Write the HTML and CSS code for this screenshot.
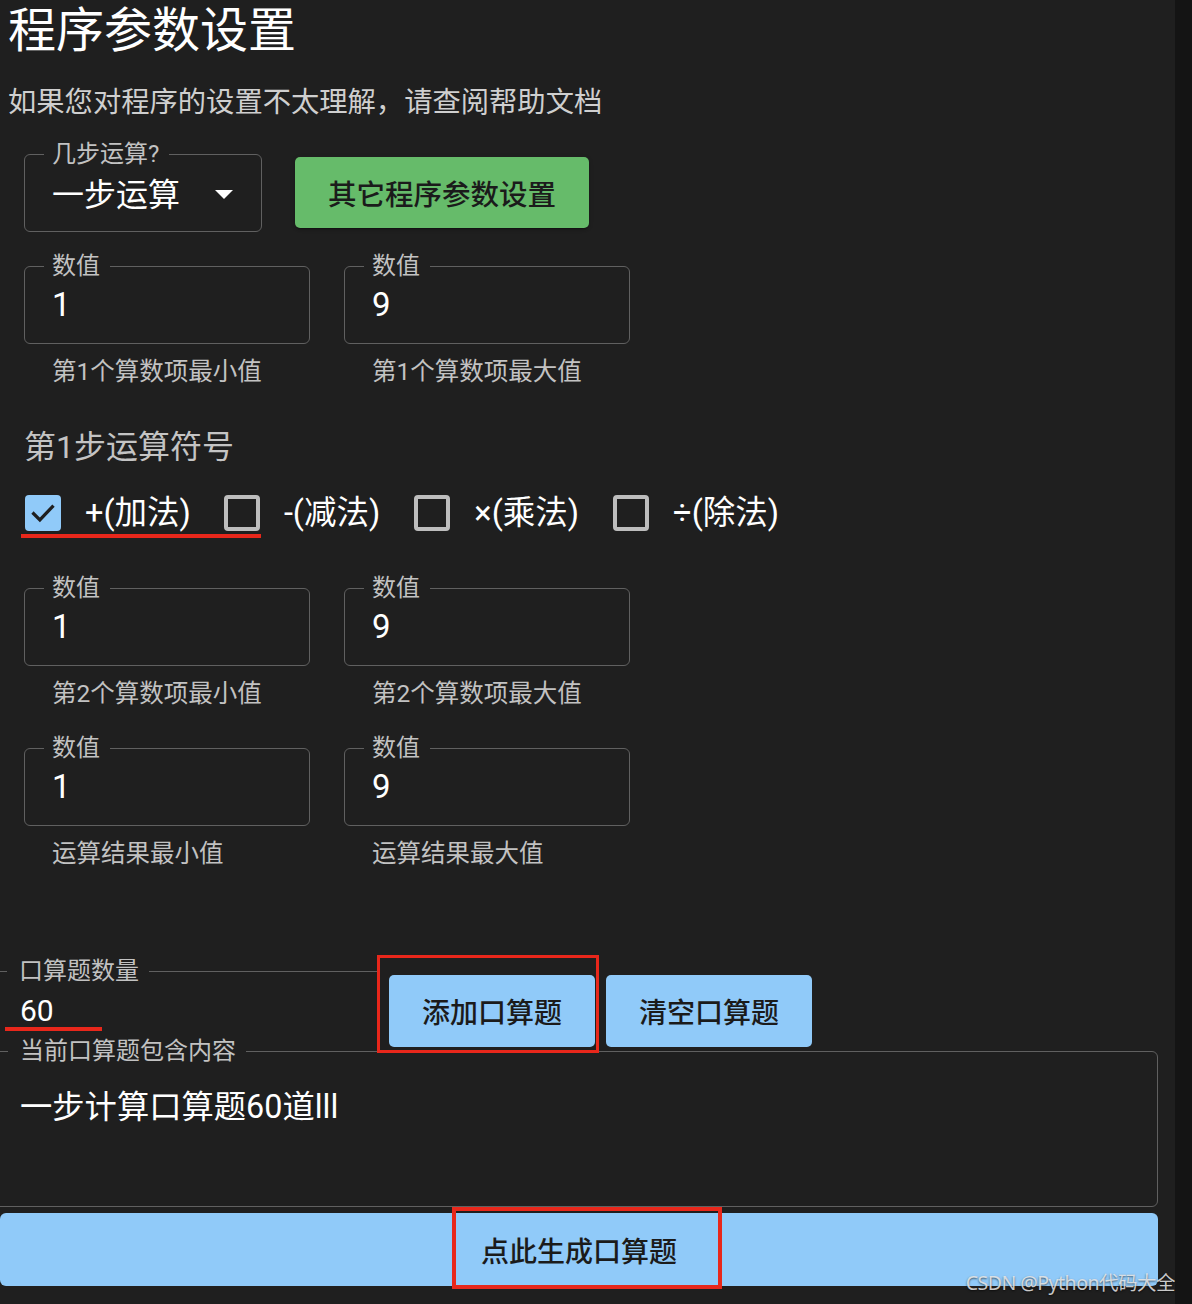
FILE: index.html
```html
<!DOCTYPE html>
<html lang="zh-CN">
<head>
<meta charset="utf-8">
<title>程序参数设置</title>
<link rel="stylesheet" href="styles.css">
</head>
<body>
<div class="shell">
  <main class="page">
    <h1 class="title">程序参数设置</h1>
    <p class="subtitle">如果您对程序的设置不太理解，请查阅帮助文档</p>

    <div class="row-top">
      <fieldset class="field select">
        <legend>几步运算?</legend>
        <div class="field-value select-value">
          <span>一步运算</span>
          <span class="arrow"></span>
        </div>
      </fieldset>
      <button class="btn btn-green">其它程序参数设置</button>
    </div>

    <div class="range">
      <div class="range-col">
        <fieldset class="field num"><legend>数值</legend><div class="field-value">1</div></fieldset>
        <div class="helper">第1个算数项最小值</div>
      </div>
      <div class="range-col">
        <fieldset class="field num"><legend>数值</legend><div class="field-value">9</div></fieldset>
        <div class="helper">第1个算数项最大值</div>
      </div>
    </div>

    <h2 class="op-title">第1步运算符号</h2>

    <div class="ops">
      <span class="underline"></span>
      <label class="op"><span class="cb checked"><svg viewBox="0 0 24 24" width="30" height="30"><path d="M4.5 12.5l5 5L19.5 7" fill="none" stroke="#1f1f1f" stroke-width="2.6" stroke-linecap="square"/></svg></span><span class="op-label">+(加法)</span></label>
      <label class="op"><span class="cb"></span><span class="op-label">-(减法)</span></label>
      <label class="op"><span class="cb"></span><span class="op-label">×(乘法)</span></label>
      <label class="op"><span class="cb"></span><span class="op-label">÷(除法)</span></label>
    </div>

    <div class="range range-2">
      <div class="range-col">
        <fieldset class="field num"><legend>数值</legend><div class="field-value">1</div></fieldset>
        <div class="helper">第2个算数项最小值</div>
      </div>
      <div class="range-col">
        <fieldset class="field num"><legend>数值</legend><div class="field-value">9</div></fieldset>
        <div class="helper">第2个算数项最大值</div>
      </div>
    </div>

    <div class="range range-3">
      <div class="range-col">
        <fieldset class="field num"><legend>数值</legend><div class="field-value">1</div></fieldset>
        <div class="helper">运算结果最小值</div>
      </div>
      <div class="range-col">
        <fieldset class="field num"><legend>数值</legend><div class="field-value">9</div></fieldset>
        <div class="helper">运算结果最大值</div>
      </div>
    </div>

    <div class="count-row">
      <fieldset class="count">
        <legend>口算题数量</legend>
        <div class="count-value">60</div>
      </fieldset>
      <div class="btn-group">
        <div class="marked">
          <button class="btn btn-blue">添加口算题</button>
        </div>
        <button class="btn btn-blue">清空口算题</button>
      </div>
    </div>

    <fieldset class="content">
      <legend>当前口算题包含内容</legend>
      <div class="content-text">一步计算口算题60道lll</div>
    </fieldset>

    <button class="btn btn-generate"><span class="gen-text">点此生成口算题</span></button>

    <div class="watermark">CSDN @Python代码大全</div>
  </main>
  <div class="strip"></div>
</div>
</body>
</html>
```

FILE: styles.css
```css
* { box-sizing: border-box; }

html, body {
  margin: 0;
  padding: 0;
  background: #1f1f1f;
}

body {
  font-family: Roboto, "Noto Sans CJK SC", sans-serif;
  color: #fff;
  overflow: hidden;
}

.shell {
  display: flex;
  width: 1192px;
  height: 1304px;
}

.page {
  position: relative;
  width: 1175px;
  flex: none;
  padding: 0 0 0 8px;
  background: #1f1f1f;
  overflow: hidden;
}

.strip {
  flex: 1;
  background: #141414;
}

.title {
  margin: 3px 0 0;
  font-size: 48px;
  line-height: 56px;
  font-weight: 400;
  color: #fff;
}

.subtitle {
  margin: 26px 0 0;
  font-size: 28.3px;
  line-height: 36px;
  color: #cfcfcf;
}

/* outlined fields */
.field {
  margin: 0;
  padding: 0;
  border: 1px solid #606060;
  border-radius: 6px;
  min-width: 0;
}

.field legend {
  margin-left: 19px;
  padding: 0 10px 0 8px;
  font-size: 24px;
  line-height: 24px;
  color: #c2c2c2;
}

.field-value {
  height: 65px;
  padding: 11px 0 0 27px;
  font-size: 33px;
  line-height: 32px;
  color: #fff;
}

.row-top {
  display: flex;
  align-items: flex-start;
  gap: 33px;
  margin: 21px 0 0 16px;
}

.select {
  width: 238px;
}

.select-value {
  display: flex;
  align-items: center;
  justify-content: space-between;
  padding: 0 28px 8px 27px;
  font-size: 32px;
}

.arrow {
  width: 0;
  height: 0;
  border-left: 9.5px solid transparent;
  border-right: 9.5px solid transparent;
  border-top: 9px solid #fff;
}

.btn {
  border: 0;
  border-radius: 5px;
  font-family: Roboto, "Noto Sans CJK SC", sans-serif;
  font-weight: 500;
  color: #1b1b1b;
  cursor: pointer;
  padding: 0;
}

.btn-green {
  margin-top: 15px;
  width: 294px;
  height: 71px;
  background: #66bb6a;
  font-size: 28.5px;
  box-shadow: 0 3px 1px -2px rgba(0,0,0,.2), 0 2px 2px rgba(0,0,0,.14), 0 1px 5px rgba(0,0,0,.12);
}

.range {
  display: flex;
  gap: 34px;
  margin: 22px 0 0 16px;
}

.range-col {
  width: 286px;
}

.helper {
  margin: 13px 0 0 28px;
  font-size: 24.5px;
  line-height: 30px;
  color: #c2c2c2;
}

.op-title {
  margin: 40px 0 0 16px;
  font-size: 32px;
  line-height: 40px;
  font-weight: 400;
  color: #c4c4c4;
}

.ops {
  position: relative;
  display: flex;
  align-items: center;
  gap: 34px;
  height: 40px;
  margin: 26px 0 0 17px;
}

.op {
  display: flex;
  align-items: center;
  gap: 24px;
}

.op:first-of-type {
  margin-right: -1px;
}

.cb {
  width: 36px;
  height: 36px;
  border: 4px solid #bdbdbd;
  border-radius: 4px;
  display: flex;
  align-items: center;
  justify-content: center;
}

.cb.checked {
  border: 0;
  background: #90caf9;
}

.op-label {
  font-size: 32.5px;
  line-height: 40px;
  color: #fff;
}

.underline {
  position: absolute;
  left: -4px;
  top: 41px;
  width: 240px;
  height: 4px;
  background: #e8271b;
}

.range-2 { margin-top: 43px; }
.range-3 { margin-top: 27px; }

.count-row {
  display: flex;
  align-items: flex-start;
  margin: 86px 0 -8px -8px;
}

.count {
  margin: 4px 0 0 -10px;
  padding: 0;
  width: 387px;
  border: 0;
  border-top: 1px solid #606060;
  min-width: 0;
}

.count legend,
.content legend {
  margin-left: 17px;
  padding: 0 10px 0 12px;
  font-size: 24px;
  line-height: 24px;
  color: #c2c2c2;
}

.count-value {
  position: relative;
  padding: 10px 0 0 30px;
  font-size: 30px;
  line-height: 36px;
  color: #fff;
}

.count-value::after {
  content: "";
  position: absolute;
  left: 15px;
  top: 44px;
  width: 97px;
  height: 4px;
  background: #e8271b;
}

.btn-group {
  display: flex;
  gap: 11px;
  margin: 20px 0 0 12px;
}

.marked {
  position: relative;
}

.marked::after {
  content: "";
  position: absolute;
  left: -12px;
  top: -20px;
  right: -4px;
  bottom: -6px;
  border: 3px solid #e8271b;
  pointer-events: none;
}

.btn-blue {
  width: 206px;
  height: 72px;
  background: #90caf9;
  font-size: 28px;
}

.content {
  margin: 0 0 0 -18px;
  padding: 0;
  width: 1168px;
  border: 1px solid #606060;
  border-radius: 6px;
  min-width: 0;
}

.content-text {
  height: 143px;
  padding: 24px 0 0 29px;
  font-size: 32.3px;
  line-height: 40px;
  color: #fff;
}

.btn-generate {
  position: relative;
  display: block;
  margin: 6px 0 0 -8px;
  width: 1158px;
  height: 73px;
  background: #90caf9;
  border-radius: 6px;
  font-size: 28px;
}

.gen-text {
  position: relative;
}

.gen-text::after {
  content: "";
  position: absolute;
  left: -29px;
  right: -45px;
  top: -29px;
  height: 74px;
  border: 4px solid #e8271b;
}

.watermark {
  position: absolute;
  right: 0;
  top: 1270px;
  font-family: "Noto Sans", "Noto Sans CJK SC", sans-serif;
  font-size: 19.5px;
  line-height: 26px;
  color: rgba(235, 235, 235, 0.85);
  text-shadow: 0 1px 2px rgba(0,0,0,0.6);
  letter-spacing: -0.5px;
}
```
